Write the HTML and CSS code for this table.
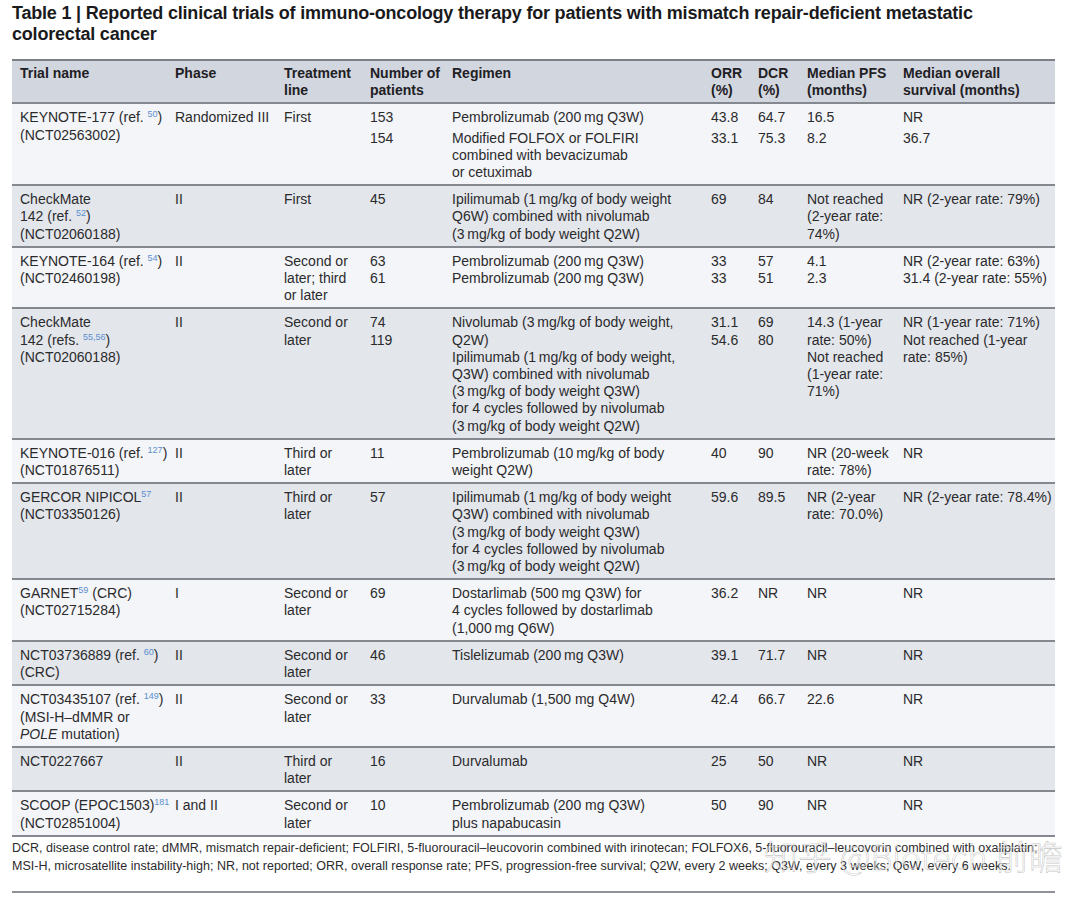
FILE: index.html
```html
<!DOCTYPE html>
<html lang="en">
<head>
<meta charset="utf-8">
<title>Table 1</title>
<link rel="stylesheet" href="styles.css">
</head>
<body>
<div class="page">
  <h1 class="title">Table 1 | Reported clinical trials of immuno-oncology therapy for patients with mismatch repair-deficient metastatic<br>colorectal cancer</h1>
  <table class="trials">
    <colgroup>
      <col class="c-trial"><col class="c-phase"><col class="c-line"><col class="c-num"><col class="c-reg"><col class="c-orr"><col class="c-dcr"><col class="c-pfs"><col class="c-os">
    </colgroup>
    <thead>
      <tr>
        <th>Trial name</th>
        <th>Phase</th>
        <th>Treatment<br>line</th>
        <th>Number of<br>patients</th>
        <th>Regimen</th>
        <th>ORR<br>(%)</th>
        <th>DCR<br>(%)</th>
        <th>Median PFS<br>(months)</th>
        <th>Median overall<br>survival (months)</th>
      </tr>
    </thead>
    <tbody>
      <tr class="odd">
        <td>KEYNOTE-177 (ref. <sup>50</sup>)<br>(NCT02563002)</td>
        <td>Randomized III</td>
        <td>First</td>
        <td><div>153</div><div class="gap">154</div></td>
        <td><div>Pembrolizumab (200&#8239;mg Q3W)</div><div class="gap">Modified FOLFOX or FOLFIRI<br>combined with bevacizumab<br>or cetuximab</div></td>
        <td><div>43.8</div><div class="gap">33.1</div></td>
        <td><div>64.7</div><div class="gap">75.3</div></td>
        <td><div>16.5</div><div class="gap">8.2</div></td>
        <td><div>NR</div><div class="gap">36.7</div></td>
      </tr>
      <tr class="even">
        <td>CheckMate<br>142 (ref. <sup>52</sup>)<br>(NCT02060188)</td>
        <td>II</td>
        <td>First</td>
        <td>45</td>
        <td>Ipilimumab (1&#8239;mg/kg of body weight<br>Q6W) combined with nivolumab<br>(3&#8239;mg/kg of body weight Q2W)</td>
        <td>69</td>
        <td>84</td>
        <td>Not reached<br>(2-year rate:<br>74%)</td>
        <td>NR (2-year rate: 79%)</td>
      </tr>
      <tr class="odd">
        <td>KEYNOTE-164 (ref. <sup>54</sup>)<br>(NCT02460198)</td>
        <td>II</td>
        <td>Second or<br>later; third<br>or later</td>
        <td>63<br>61</td>
        <td>Pembrolizumab (200&#8239;mg Q3W)<br>Pembrolizumab (200&#8239;mg Q3W)</td>
        <td>33<br>33</td>
        <td>57<br>51</td>
        <td>4.1<br>2.3</td>
        <td>NR (2-year rate: 63%)<br>31.4 (2-year rate: 55%)</td>
      </tr>
      <tr class="even">
        <td>CheckMate<br>142 (refs. <sup>55,56</sup>)<br>(NCT02060188)</td>
        <td>II</td>
        <td>Second or<br>later</td>
        <td>74<br>119</td>
        <td>Nivolumab (3&#8239;mg/kg of body weight,<br>Q2W)<br>Ipilimumab (1&#8239;mg/kg of body weight,<br>Q3W) combined with nivolumab<br>(3&#8239;mg/kg of body weight Q3W)<br>for 4 cycles followed by nivolumab<br>(3&#8239;mg/kg of body weight Q2W)</td>
        <td>31.1<br>54.6</td>
        <td>69<br>80</td>
        <td>14.3 (1-year<br>rate: 50%)<br>Not reached<br>(1-year rate:<br>71%)</td>
        <td>NR (1-year rate: 71%)<br>Not reached (1-year<br>rate: 85%)</td>
      </tr>
      <tr class="odd">
        <td>KEYNOTE-016 (ref. <sup>127</sup>)<br>(NCT01876511)</td>
        <td>II</td>
        <td>Third or<br>later</td>
        <td>11</td>
        <td>Pembrolizumab (10&#8239;mg/kg of body<br>weight Q2W)</td>
        <td>40</td>
        <td>90</td>
        <td>NR (20-week<br>rate: 78%)</td>
        <td>NR</td>
      </tr>
      <tr class="even">
        <td>GERCOR NIPICOL<sup>57</sup><br>(NCT03350126)</td>
        <td>II</td>
        <td>Third or<br>later</td>
        <td>57</td>
        <td>Ipilimumab (1&#8239;mg/kg of body weight<br>Q3W) combined with nivolumab<br>(3&#8239;mg/kg of body weight Q3W)<br>for 4 cycles followed by nivolumab<br>(3&#8239;mg/kg of body weight Q2W)</td>
        <td>59.6</td>
        <td>89.5</td>
        <td>NR (2-year<br>rate: 70.0%)</td>
        <td>NR (2-year rate: 78.4%)</td>
      </tr>
      <tr class="odd">
        <td>GARNET<sup>59</sup> (CRC)<br>(NCT02715284)</td>
        <td>I</td>
        <td>Second or<br>later</td>
        <td>69</td>
        <td>Dostarlimab (500&#8239;mg Q3W) for<br>4 cycles followed by dostarlimab<br>(1,000&#8239;mg Q6W)</td>
        <td>36.2</td>
        <td>NR</td>
        <td>NR</td>
        <td>NR</td>
      </tr>
      <tr class="even">
        <td>NCT03736889 (ref. <sup>60</sup>)<br>(CRC)</td>
        <td>II</td>
        <td>Second or<br>later</td>
        <td>46</td>
        <td>Tislelizumab (200&#8239;mg Q3W)</td>
        <td>39.1</td>
        <td>71.7</td>
        <td>NR</td>
        <td>NR</td>
      </tr>
      <tr class="odd">
        <td>NCT03435107 (ref. <sup>149</sup>)<br>(MSI-H–dMMR or<br><i>POLE</i> mutation)</td>
        <td>II</td>
        <td>Second or<br>later</td>
        <td>33</td>
        <td>Durvalumab (1,500 mg Q4W)</td>
        <td>42.4</td>
        <td>66.7</td>
        <td>22.6</td>
        <td>NR</td>
      </tr>
      <tr class="even">
        <td>NCT0227667</td>
        <td>II</td>
        <td>Third or<br>later</td>
        <td>16</td>
        <td>Durvalumab</td>
        <td>25</td>
        <td>50</td>
        <td>NR</td>
        <td>NR</td>
      </tr>
      <tr class="odd">
        <td>SCOOP (EPOC1503)<sup>181</sup><br>(NCT02851004)</td>
        <td>I and II</td>
        <td>Second or<br>later</td>
        <td>10</td>
        <td>Pembrolizumab (200 mg Q3W)<br>plus napabucasin</td>
        <td>50</td>
        <td>90</td>
        <td>NR</td>
        <td>NR</td>
      </tr>
    </tbody>
  </table>
  <p class="notes">DCR, disease control rate; dMMR, mismatch repair-deficient; FOLFIRI, 5-fluorouracil–leucovorin combined with irinotecan; FOLFOX6, 5-fluorouracil–leucovorin combined with oxaliplatin;<br>MSI-H, microsatellite instability-high; NR, not reported; ORR, overall response rate; PFS, progression-free survival; Q2W, every 2 weeks; Q3W, every 3 weeks; Q6W, every 6 weeks.</p>
  <div class="watermark">知乎 @Biotech 前瞻</div>
</div>
</body>
</html>
```
FILE: styles.css
```css
html, body {
  margin: 0;
  padding: 0;
  background: #ffffff;
}

.page {
  position: relative;
  width: 1080px;
  height: 907px;
  padding: 3px 0 0 12px;
  box-sizing: border-box;
  font-family: "Liberation Sans", Arial, sans-serif;
  color: #2b2b2d;
}

.title {
  margin: 0;
  font-size: 18px;
  line-height: 21px;
  font-weight: 700;
  letter-spacing: -0.2px;
  color: #1a1a1c;
}

.trials {
  margin-top: 14px;
  width: 1043px;
  border-collapse: collapse;
  table-layout: fixed;
  font-size: 14px;
  line-height: 17.2px;
  border-top: 2px solid #7d8086;
}

.c-trial { width: 155px; }
.c-phase { width: 109px; }
.c-line { width: 86px; }
.c-num { width: 82px; }
.c-reg { width: 259px; }
.c-orr { width: 47px; }
.c-dcr { width: 49px; }
.c-pfs { width: 96px; }
.c-os { width: 160px; }

.trials th,
.trials td {
  text-align: left;
  vertical-align: top;
  padding: 5px 0 3px 8px;
  white-space: nowrap;
  border-bottom: 2px solid #85888e;
}

.trials th {
  font-weight: 700;
  background: #d1d6df;
  color: #1f2024;
  padding-top: 4px;
}

.trials tr.odd td { background: #f4f5f8; }
.trials tr.even td { background: #e3e6eb; }

.trials .gap { margin-top: 3px; }

.trials sup {
  font-size: 9px;
  line-height: 0;
  color: #5a8fcf;
  vertical-align: 5px;
}

.notes {
  margin: 2px 0 0 0;
  font-size: 12.5px;
  line-height: 18px;
  color: #2b2b2d;
  width: 1043px;
  padding-bottom: 16px;
  border-bottom: 2px solid #8e9196;
  white-space: nowrap;
}

.watermark {
  position: absolute;
  left: 764px;
  top: 836px;
  font-family: "Noto Sans CJK SC", "DejaVu Sans", sans-serif;
  font-size: 34px;
  font-weight: 300;
  line-height: 40px;
  color: rgba(255, 255, 255, 0.5);
  -webkit-text-stroke: 0.6px rgba(130, 130, 130, 0.45);
  white-space: nowrap;
}
```
